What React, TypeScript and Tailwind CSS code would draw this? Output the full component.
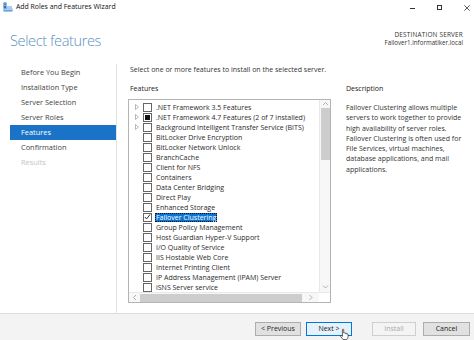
import React from "react";

type Row = { label: string; exp?: boolean; partial?: boolean; checked?: boolean; selected?: boolean };

const rows: Row[] = [
  { label: ".NET Framework 3.5 Features", exp: true },
  { label: ".NET Framework 4.7 Features (2 of 7 installed)", exp: true, partial: true },
  { label: "Background Intelligent Transfer Service (BITS)", exp: true },
  { label: "BitLocker Drive Encryption" },
  { label: "BitLocker Network Unlock" },
  { label: "BranchCache" },
  { label: "Client for NFS" },
  { label: "Containers" },
  { label: "Data Center Bridging" },
  { label: "Direct Play" },
  { label: "Enhanced Storage" },
  { label: "Failover Clustering", checked: true, selected: true },
  { label: "Group Policy Management" },
  { label: "Host Guardian Hyper-V Support" },
  { label: "I/O Quality of Service" },
  { label: "IIS Hostable Web Core" },
  { label: "Internet Printing Client" },
  { label: "IP Address Management (IPAM) Server" },
  { label: "iSNS Server service" },
];

const nav = [
  { label: "Before You Begin" },
  { label: "Installation Type" },
  { label: "Server Selection" },
  { label: "Server Roles" },
  { label: "Features", active: true },
  { label: "Confirmation" },
  { label: "Results", disabled: true },
];

const desc = [
  "Failover Clustering allows multiple",
  "servers to work together to provide",
  "high availability of server roles.",
  "Failover Clustering is often used for",
  "File Services, virtual machines,",
  "database applications, and mail",
  "applications.",
];

function Chevron({ dir }: { dir: "up" | "down" | "left" | "right" }) {
  const d =
    dir === "up"
      ? "M1 4 L3.5 1.5 L6 4"
      : dir === "down"
      ? "M1 1.5 L3.5 4 L6 1.5"
      : dir === "left"
      ? "M4 1 L1.5 3.5 L4 6"
      : "M1.5 1 L4 3.5 L1.5 6";
  const w = dir === "up" || dir === "down" ? 7 : 5.5;
  const h = dir === "up" || dir === "down" ? 5.5 : 7;
  return (
    <svg width={w} height={h} viewBox={`0 0 ${w} ${h}`}>
      <path d={d} fill="none" stroke="#a6a6a6" strokeWidth="0.9" />
    </svg>
  );
}

function AppIcon() {
  return (
    <svg width="10" height="10" viewBox="0 0 10 10">
      <rect x="0.5" y="0.5" width="3" height="6" fill="#2f6fb3" />
      <rect x="1" y="1.5" width="2" height="0.8" fill="#9cc4ea" />
      <rect x="1" y="3" width="2" height="0.8" fill="#9cc4ea" />
      <rect x="0.5" y="6.5" width="9" height="3" fill="#4a90d9" />
      <rect x="4" y="4" width="5" height="2.5" fill="#a9cfee" />
      <rect x="1" y="7.3" width="8" height="0.9" fill="#d6e9f8" />
    </svg>
  );
}

function HandCursor() {
  return (
    <svg width="10" height="13" viewBox="0 0 16 19">
      <path
        d="M5.5 1.5 C5.5 0.7 7.5 0.7 7.5 1.5 L7.5 7 L8.5 7 C8.5 6.3 10.5 6.3 10.5 7 L10.5 8 C10.5 7.3 12.5 7.3 12.5 8 L12.5 9 C12.5 8.3 14.5 8.3 14.5 9 L14.5 13 C14.5 15 13.5 16.5 12.5 17.5 L6.5 17.5 L2.5 12.5 C1.8 11.6 3 10.4 4 11.2 L5.5 12.5 Z"
        fill="#ffffff"
        stroke="#111"
        strokeWidth="1"
      />
    </svg>
  );
}

export default function App() {
  return (
    <div
      className="w-[474px] h-[340px] bg-white overflow-hidden flex flex-col text-[#1e1e1e] relative"
      style={{ fontFamily: "'Open Sans', 'Noto Sans', 'Liberation Sans', sans-serif" }}
    >
      {/* title bar */}
      <div className="h-[14px] flex items-center pl-[3px]">
        <AppIcon />
        <span className="ml-[3px] text-[6.9px] leading-[10px] text-[#111]">Add Roles and Features Wizard</span>
        <div className="ml-auto flex items-center gap-[22px] pr-[4px] pt-[1px]">
          <div className="w-[5px] h-[1px] bg-[#333] mt-[1px]" />
          <div className="w-[5px] h-[5px] border border-[#333]" />
          <svg width="6" height="6" viewBox="0 0 6 6">
            <path d="M0.3 0.3 L5.7 5.7 M5.7 0.3 L0.3 5.7" stroke="#333" strokeWidth="0.8" />
          </svg>
        </div>
      </div>

      {/* header */}
      <div className="h-[50px] flex justify-between">
        <div className="pl-[10px] pt-[16px] text-[14.6px] leading-[20px] font-light tracking-[-0.4px] text-[#5b8fc1]">
          Select features
        </div>
        <div className="pr-[11px] pt-[17px] text-right leading-[8px] text-[#333]">
          <div className="text-[6.4px] tracking-[0.2px]">DESTINATION SERVER</div>
          <div className="text-[6.2px]">Failover1.informatiker.local</div>
        </div>
      </div>

      {/* main */}
      <div className="h-[249px] flex">
        <div className="w-[117px] border-r border-[#e3e3e3] pt-[1px] pl-[10px]">
          {nav.map((n) => (
            <div
              key={n.label}
              className={
                "h-[15px] flex items-center pl-[11px] text-[7.4px] " +
                (n.active ? "bg-[#1a73c6] text-white" : n.disabled ? "text-[#c4c4c4]" : "text-[#444]")
              }
            >
              {n.label}
            </div>
          ))}
        </div>

        <div className="flex-1 pl-[11px] pt-[1px]">
          <div className="ml-[2px] h-[10px] leading-[10px] text-[7px] text-[#333]">
            Select one or more features to install on the selected server.
          </div>
          <div className="flex mt-[9px]">
            <div className="w-[203px]">
              <div className="ml-[2px] h-[10px] leading-[10px] text-[7px] text-[#222]">Features</div>
              <div className="mt-[5px] w-[203px] h-[204px] border border-[#b4b4b4] flex flex-col">
                <div className="flex flex-1 min-h-0">
                  <div className="flex-1 pt-[2px] overflow-hidden">
                    {rows.map((r) => (
                      <div key={r.label} className="h-[10px] flex items-center whitespace-nowrap">
                        <div className="w-[14px] flex justify-center pl-[2px]">
                          {r.exp && (
                            <svg width="4" height="6" viewBox="0 0 4 6">
                              <path d="M0.5 0.5 L3.5 3 L0.5 5.5 Z" fill="none" stroke="#9a9a9a" strokeWidth="0.7" />
                            </svg>
                          )}
                        </div>
                        <div className="w-[9px] h-[9px] border border-[#666] bg-white flex items-center justify-center shrink-0">
                          {r.partial && <div className="w-[5px] h-[5px] bg-[#111]" />}
                          {r.checked && (
                            <svg width="8" height="8" viewBox="0 0 8 8">
                              <path d="M1 4 L3 6.2 L7 1" fill="none" stroke="#111" strokeWidth="1" />
                            </svg>
                          )}
                        </div>
                        <span
                          className={
                            "ml-[3px] text-[7px] leading-[9px] px-[1px] " +
                            (r.selected
                              ? "bg-[#0a74d4] text-white outline outline-1 outline-dotted outline-[#111] -outline-offset-1"
                              : "text-[#2a2a2a]")
                          }
                        >
                          {r.label}
                        </span>
                      </div>
                    ))}
                  </div>
                  <div className="w-[11px] bg-[#f7f7f7] border-l border-[#e8e8e8] flex flex-col items-center">
                    <div className="h-[8px] flex items-center justify-center">
                      <Chevron dir="up" />
                    </div>
                    <div className="w-[9px] h-[52px] bg-[#cdcdcd]" />
                    <div className="flex-1" />
                    <div className="h-[10px] flex items-center justify-center">
                      <Chevron dir="down" />
                    </div>
                  </div>
                </div>
                <div className="h-[10px] flex bg-[#f7f7f7] border-t border-[#e8e8e8]">
                  <div className="w-[11px] flex items-center justify-center">
                    <Chevron dir="left" />
                  </div>
                  <div className="w-[162px] h-[8px] mt-[0.5px] bg-[#cdcdcd]" />
                  <div className="flex-1 flex items-center justify-center">
                    <Chevron dir="right" />
                  </div>
                  <div className="w-[11px] bg-white" />
                </div>
              </div>
            </div>
            <div className="ml-[15px]">
              <div className="h-[10px] leading-[10px] text-[7px] text-[#222]">Description</div>
              <div className="mt-[9px] text-[7px] leading-[10.3px] text-[#333]">
                {desc.map((l) => (
                  <div key={l} className="whitespace-nowrap">
                    {l}
                  </div>
                ))}
              </div>
            </div>
          </div>
        </div>
      </div>

      {/* footer */}
      <div className="flex-1 border-t border-[#dcdcdc] bg-[#f3f3f3] flex justify-end items-start pt-[8px] pr-[4px]">
        <button className="w-[46px] h-[14px] border border-[#adadad] bg-[#e1e1e1] text-[7px] leading-[12px] text-[#222]">
          &lt; Previous
        </button>
        <button className="ml-[5px] w-[46px] h-[14px] border border-[#0078d7] bg-[#e5f1fb] text-[7px] leading-[12px] text-[#222]">
          Next &gt;
        </button>
        <button className="ml-[20px] w-[44px] h-[14px] border border-[#cfcfcf] bg-[#f4f4f4] text-[7px] leading-[12px] text-[#a8a8a8]">
          Install
        </button>
        <button className="ml-[7px] w-[47px] h-[14px] border border-[#adadad] bg-[#e1e1e1] text-[7px] leading-[12px] text-[#222]">
          Cancel
        </button>
      </div>

      <div className="absolute left-[339px] top-[328px]">
        <HandCursor />
      </div>
    </div>
  );
}
